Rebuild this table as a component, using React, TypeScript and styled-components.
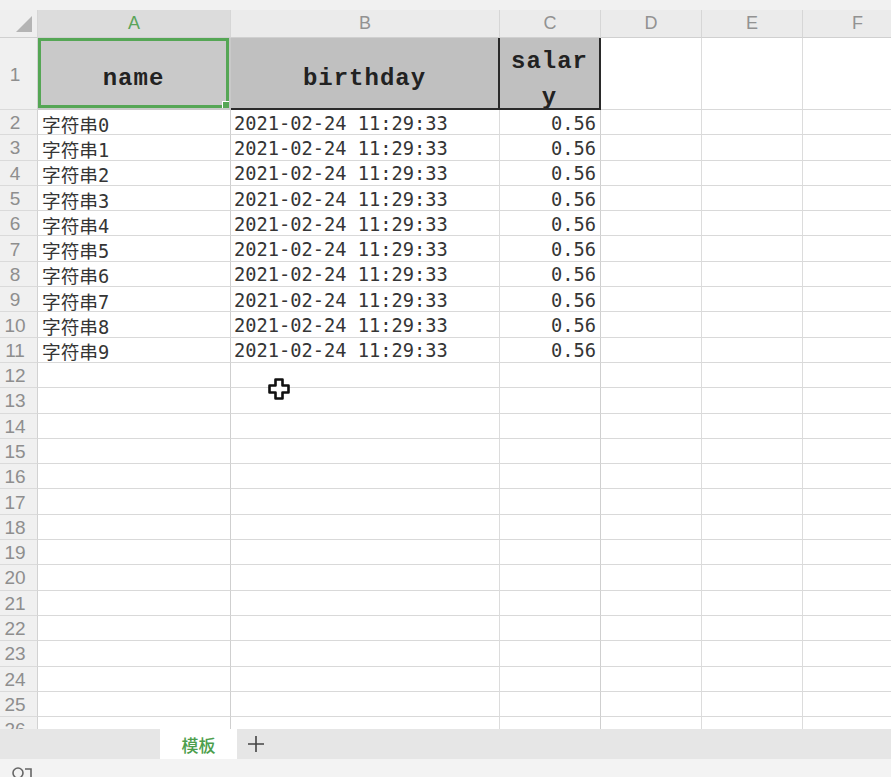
import React from "react";
import styled, { createGlobalStyle } from "styled-components";

const GlobalStyle = createGlobalStyle`
  html, body { margin: 0; padding: 0; background: #f2f2f2; }
  body { font-family: "Liberation Sans", "Noto Sans CJK SC", sans-serif; }
`;

const COLS = "38px 193px 269px 101px 101px 101px 110px";
const ROW_H = 25.3;

const Page = styled.div`
  width: 891px;
  height: 777px;
  display: flex;
  flex-direction: column;
  overflow: hidden;
  background: #f2f2f2;
`;

const TopStrip = styled.div`
  height: 10px;
  flex: none;
  background: #f1f1f1;
`;

const Sheet = styled.div`
  flex: none;
  height: 719px;
  overflow: hidden;
  position: relative;
  background: #ffffff;
`;

const Row = styled.div<{ $h: number }>`
  display: grid;
  grid-template-columns: ${COLS};
  height: ${(p) => p.$h}px;
`;

const Corner = styled.div`
  background: #efefef;
  border-right: 1px solid #d6d6d6;
  border-bottom: 1px solid #d0d0d0;
  box-sizing: border-box;
  display: flex;
  align-items: flex-end;
  justify-content: flex-end;
  padding: 0 4px 4px 0;
`;

const ColHead = styled.div<{ $active?: boolean }>`
  box-sizing: border-box;
  background: ${(p) => (p.$active ? "#dcdcdc" : "#ebebeb")};
  border-right: 1px solid #d6d6d6;
  border-bottom: 1px solid #d0d0d0;
  display: flex;
  align-items: center;
  justify-content: center;
  font-family: "Liberation Sans", sans-serif;
  font-size: 18px;
  color: ${(p) => (p.$active ? "#5aa45a" : "#929292")};
`;

const RowHead = styled.div`
  box-sizing: border-box;
  background: #f0f0f0;
  border-right: 1px solid #d2d2d2;
  border-bottom: 1px solid #dadada;
  display: flex;
  align-items: center;
  justify-content: center;
  padding: 2px 7px 0 0;
  font-family: "Liberation Sans", sans-serif;
  font-size: 19px;
  color: #8e8e8e;
  overflow: hidden;
`;

const HeadCell = styled.div<{ $selected?: boolean }>`
  position: relative;
  box-sizing: border-box;
  background: ${(p) => (p.$selected ? "#c9c9c9" : "#c0c0c0")};
  border-right: 2px solid ${(p) => (p.$selected ? "transparent" : "#2a2a2a")};
  border-bottom: 2px solid ${(p) => (p.$selected ? "transparent" : "#2a2a2a")};
  box-shadow: ${(p) => (p.$selected ? "inset 0 0 0 3px #55a655" : "none")};
  display: flex;
  flex-direction: column;
  align-items: center;
  justify-content: center;
  padding-top: 11px;
  font-family: "Liberation Mono", monospace;
  font-weight: bold;
  font-size: 24px;
  letter-spacing: 1px;
  line-height: 36px;
  color: #222222;
  overflow: hidden;
`;

const SplitHead = styled(HeadCell)`
  justify-content: flex-start;
  padding-top: 6px;
`;

const Handle = styled.span`
  position: absolute;
  right: -1px;
  bottom: -1px;
  width: 6px;
  height: 6px;
  background: #55a655;
  border: 1px solid #ffffff;
`;

const Cell = styled.div<{ $align?: "left" | "right"; $dark?: boolean }>`
  box-sizing: border-box;
  background: #ffffff;
  border-right: 1px solid ${(p) => (p.$dark ? "#cfcfcf" : "#dcdcdc")};
  border-bottom: 1px solid #d9d9d9;
  display: flex;
  align-items: center;
  justify-content: ${(p) => (p.$align === "right" ? "flex-end" : "flex-start")};
  padding: 2px 4px 0 4px;
  font-family: "DejaVu Sans Mono", "Noto Sans CJK SC", monospace;
  font-size: 18.7px;
  color: #353535;
  white-space: nowrap;
  overflow: hidden;
`;

const DateCell = styled(Cell)`
  padding-left: 3px;
`;

const Cursor = styled.svg`
  position: absolute;
  left: 268px;
  top: 368px;
`;

const TabBar = styled.div`
  flex: none;
  height: 30px;
  background: #e6e6e6;
  display: flex;
  align-items: stretch;
  padding-left: 160px;
  gap: 10px;
`;

const Tab = styled.div`
  width: 77px;
  background: #ffffff;
  display: flex;
  align-items: center;
  justify-content: center;
  font-family: "Noto Sans CJK SC", sans-serif;
  font-size: 17px;
  font-weight: 500;
  color: #4c9e4c;
`;

const AddTab = styled.div`
  display: flex;
  align-items: center;
  justify-content: center;
  width: 18px;
  color: #444;
`;

const StatusBar = styled.div`
  flex: 1;
  background: #f3f3f3;
  display: flex;
  align-items: flex-start;
  padding: 6px 0 0 11px;
  overflow: hidden;
`;

const names = Array.from({ length: 10 }, (_, i) => `字符串${i}`);

export default function App() {
  const emptyRows = Array.from({ length: 15 }, (_, i) => i + 12);
  return (
    <>
      <GlobalStyle />
      <Page>
        <TopStrip />
        <Sheet>
          <Row $h={28}>
            <Corner>
              <svg width="17" height="17" viewBox="0 0 17 17">
                <polygon points="16,0 16,16 0,16" fill="#b4b4b4" />
              </svg>
            </Corner>
            <ColHead $active>A</ColHead>
            <ColHead>B</ColHead>
            <ColHead>C</ColHead>
            <ColHead>D</ColHead>
            <ColHead>E</ColHead>
            <ColHead>F</ColHead>
          </Row>
          <Row $h={72}>
            <RowHead>1</RowHead>
            <HeadCell $selected>
              name
              <Handle />
            </HeadCell>
            <HeadCell>birthday</HeadCell>
            <SplitHead>
              <span>salar</span>
              <span>y</span>
            </SplitHead>
            <Cell />
            <Cell />
            <Cell />
          </Row>
          {names.map((n, i) => (
            <Row $h={ROW_H} key={n}>
              <RowHead>{i + 2}</RowHead>
              <Cell $dark>{n}</Cell>
              <DateCell>2021-02-24 11:29:33</DateCell>
              <Cell $align="right" $dark>0.56</Cell>
              <Cell />
              <Cell />
              <Cell />
            </Row>
          ))}
          {emptyRows.map((r) => (
            <Row $h={ROW_H} key={r}>
              <RowHead>{r}</RowHead>
              <Cell $dark />
              <Cell />
              <Cell $dark />
              <Cell />
              <Cell />
              <Cell />
            </Row>
          ))}
          <Cursor width="22" height="22" viewBox="0 0 22 22">
            <path
              d="M7.5 1.5 H14.5 V7.5 H20.5 V14.5 H14.5 V20.5 H7.5 V14.5 H1.5 V7.5 H7.5 Z"
              fill="#ffffff"
              stroke="#111111"
              strokeWidth="2.6"
              strokeLinejoin="round"
            />
          </Cursor>
        </Sheet>
        <TabBar>
          <Tab>模板</Tab>
          <AddTab>
            <svg width="18" height="18" viewBox="0 0 18 18">
              <path d="M9 1 V17 M1 9 H17" stroke="#444" strokeWidth="1.6" />
            </svg>
          </AddTab>
        </TabBar>
        <StatusBar>
          <svg width="24" height="14" viewBox="0 0 24 14">
            <circle cx="7" cy="8" r="5" fill="none" stroke="#666" strokeWidth="1.6" />
            <path d="M14 4 H20 V14" fill="none" stroke="#666" strokeWidth="1.6" />
          </svg>
        </StatusBar>
      </Page>
    </>
  );
}
